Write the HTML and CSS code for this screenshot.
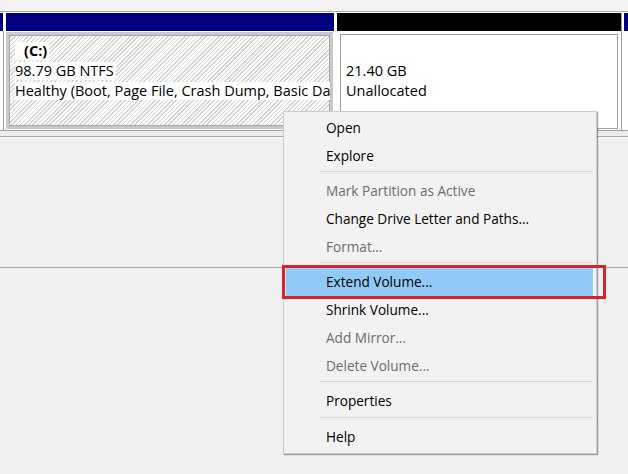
FILE: index.html
```html
<!DOCTYPE html>
<html>
<head>
<meta charset="utf-8">
<link rel="stylesheet" href="styles.css">
</head>
<body>
<div class="top"></div>
<div class="disk">
  <div class="col edge-l">
    <div class="hdr navy"></div>
    <div class="edge-body"></div>
  </div>
  <div class="col part-c">
    <div class="hdr navy"></div>
    <div class="box sel">
      <span class="lbl vol">(C:)</span>
      <span class="lbl">98.79 GB NTFS</span>
      <span class="lbl">Healthy (Boot, Page File, Crash Dump, Basic Da</span>
    </div>
  </div>
  <div class="col part-u">
    <div class="hdr black"></div>
    <div class="box un">
      <span class="lbl">21.40 GB</span>
      <span class="lbl">Unallocated</span>
    </div>
  </div>
  <div class="col edge-r">
    <div class="hdr navy"></div>
  </div>
</div>
<div class="band"></div>
<div class="panel"></div>
<div class="rest"></div>

<div class="menu">
  <div class="item">Open</div>
  <div class="item">Explore</div>
  <div class="sep"></div>
  <div class="item off">Mark Partition as Active</div>
  <div class="item">Change Drive Letter and Paths...</div>
  <div class="item off">Format...</div>
  <div class="sep"></div>
  <div class="item hot">Extend Volume...</div>
  <div class="item">Shrink Volume...</div>
  <div class="item off">Add Mirror...</div>
  <div class="item off">Delete Volume...</div>
  <div class="sep"></div>
  <div class="item">Properties</div>
  <div class="sep"></div>
  <div class="item">Help</div>
</div>
<div class="callout"></div>
</body>
</html>
```
FILE: styles.css
```css
* { box-sizing: border-box; }
html, body { margin: 0; padding: 0; }
body {
  width: 628px;
  height: 474px;
  overflow: hidden;
  background: #f0f0f0;
  font-family: "Open Sans", "Noto Sans", sans-serif;
  font-size: 14px;
  color: #000;
  position: relative;
}
.top {
  height: 12px;
  background: #f3f3f3;
  border-bottom: 1px solid #a9a9a9;
}
.disk {
  display: flex;
  height: 119px;
  padding-top: 1px;
  background: #fff;
  border-bottom: 1px solid #a0a0a0;
}
.col { display: flex; flex-direction: column; }
.hdr { height: 18px; flex: none; }
.navy { background: #000080; }
.black { background: #000; }

.edge-l { width: 4px; }
.edge-l .hdr { width: 3px; }
.edge-body { flex: 1; border-right: 1px solid #a0a0a0; }

.part-c { width: 328px; margin-left: 2px; }
.part-u { width: 284px; margin-left: 3px; }
.edge-r { width: 7px; border-left: 1px solid #9c9c9c; }
.edge-r .hdr { margin-left: 2px; }

.box {
  display: flex;
  flex-direction: column;
  align-items: flex-start;
  overflow: hidden;
  white-space: nowrap;
  font-size: 14.5px;
}
.sel {
  margin-top: 1px;
  width: 327px;
  height: 97px;
  border: 3px solid #c9c9c9;
  box-shadow: inset 0 0 0 1px #a8a8a8;
  padding: 7px 0 0 6px;
  background: repeating-linear-gradient(135deg, #ffffff 0 1.9px, #d2d2d2 1.9px 3px);
}
.un {
  margin: 3px 3px 0 3px;
  height: 95px;
  border: 1px solid #a0a0a0;
  background: #fff;
  padding: 27px 0 0 5px;
}
.lbl {
  display: block;
  background: #fff;
  line-height: 18px;
  height: 18px;
  margin-bottom: 2px;
  padding-right: 2px;
}
.vol { font-weight: bold; padding-left: 9px; }

.band {
  height: 6px;
  background: #ececec;
  border-bottom: 1px solid #a6a6a6;
}
.panel {
  height: 131px;
  background: #f0f0f0;
  border-top: 1px solid #fafafa;
  border-bottom: 1px solid #a6a6a6;
}
.rest { height: 200px; background: #f0f0f0; }

.menu {
  position: absolute;
  left: 283px;
  top: 111px;
  width: 314px;
  background: #f2f2f2;
  border: 1px solid #cccccc;
  box-shadow: 1px 1px 1px rgba(0,0,0,0.35);
  padding: 2px 3px 2px 2px;
}
.item {
  height: 27.7px;
  line-height: 27.7px;
  padding-left: 40px;
  white-space: nowrap;
  font-size: 13.6px;
}
.off { color: #6d6d6d; }
.hot { background: #91c9f7; }
.sep {
  height: 1px;
  margin: 2px 0 5px 34px;
  background: #d7d7d7;
}
.callout {
  position: absolute;
  left: 282px;
  top: 265px;
  width: 324px;
  height: 34px;
  border: 3px solid #d9222c;
}
```
